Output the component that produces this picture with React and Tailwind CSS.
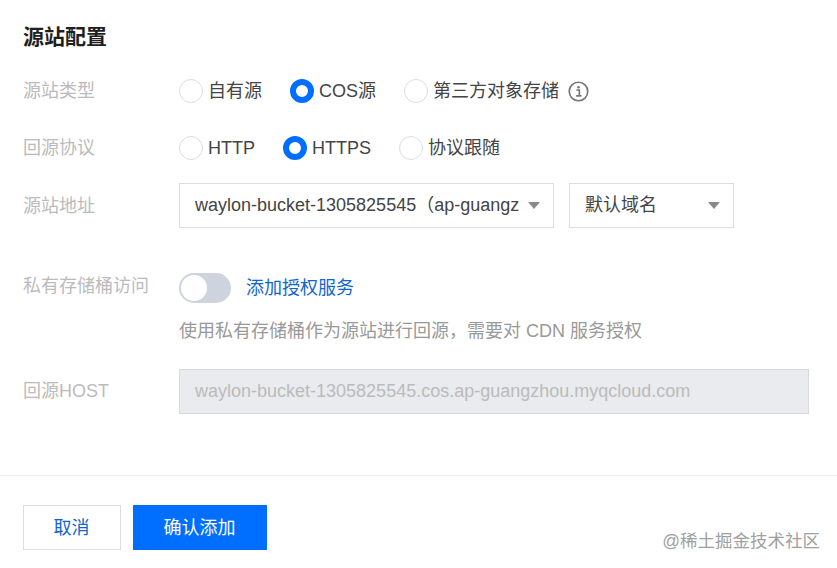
import React from 'react';

const FONT = "font-['Liberation_Sans','Noto_Sans_CJK_SC',sans-serif]";

const Radio = ({ label, checked, className = '' }) => (
    <label className={`flex items-center ${className}`}>
        {checked ? (
            <span className="w-6 h-6 rounded-full border-[6px] border-[#006eff] bg-white shrink-0" />
        ) : (
            <span className="w-6 h-6 rounded-full border border-[#dddddd] bg-white shrink-0" />
        )}
        <span className="ml-[5px] text-[18px] text-[#444444] leading-6 whitespace-nowrap">{label}</span>
    </label>
);

const Caret = () => (
    <span className="w-0 h-0 border-x-[6px] border-x-transparent border-t-[7px] border-t-[#888888] shrink-0" />
);

const Row = ({ label, className = '', labelClass = '', children }) => (
    <div className={`flex ${className}`}>
        <div className={`w-[156px] shrink-0 text-[18px] text-[#bbbbbb] leading-6 whitespace-nowrap ${labelClass}`}>{label}</div>
        <div className="flex-1 min-w-0">{children}</div>
    </div>
);

export default function App() {
    return (
        <div className={`${FONT} relative w-[837px] h-[568px] bg-white overflow-hidden`}>
            <div className="pl-[23px] pr-[28px] pt-[24px] h-[475px]">
                <h2 className="text-[21px] font-bold text-[#1f1f1f] leading-[26px] mb-[29px]">源站配置</h2>

                <Row label="源站类型" className="items-center h-6 mb-[33px]">
                    <div className="flex items-center">
                        <Radio label="自有源" />
                        <Radio label="COS源" checked className="ml-[28px]" />
                        <Radio label="第三方对象存储" className="ml-[28px]" />
                        <svg viewBox="0 0 20 20" className="w-[21px] h-[21px] ml-[9px] text-[#777777]" fill="none">
                            <circle cx="10" cy="10" r="8.8" stroke="currentColor" strokeWidth="1.6" />
                            <circle cx="10" cy="5.9" r="1.2" fill="currentColor" />
                            <path d="M8 8.6h2.8v5.2M7.8 14.2h5" stroke="currentColor" strokeWidth="1.6" />
                        </svg>
                    </div>
                </Row>

                <Row label="回源协议" className="items-center h-6 mb-[23px]">
                    <div className="flex items-center">
                        <Radio label="HTTP" />
                        <Radio label="HTTPS" checked className="ml-[28px]" />
                        <Radio label="协议跟随" className="ml-[28px]" />
                    </div>
                </Row>

                <Row label="源站地址" className="items-center h-[45px] mb-[45px]">
                    <div className="flex gap-[15px]">
                        <div className="w-[375px] h-[45px] border border-[#dddddd] flex items-center pl-[15px] pr-[13px]">
                            <span className="flex-1 min-w-0 overflow-hidden whitespace-nowrap text-[18px] text-[#444444]">
                                waylon-bucket-1305825545（ap-guangz
                            </span>
                            <Caret />
                        </div>
                        <div className="w-[165px] h-[45px] border border-[#dddddd] flex items-center justify-between pl-[15px] pr-[13px]">
                            <span className="text-[18px] text-[#444444]">默认域名</span>
                            <Caret />
                        </div>
                    </div>
                </Row>

                <Row label="私有存储桶访问" className="mb-[15px]" labelClass="pt-px">
                    <div className="flex items-center h-[30px]">
                        <span className="relative w-[52px] h-[30px] rounded-full bg-[#ced4dd] shrink-0">
                            <span className="absolute left-[2px] top-[2px] w-[26px] h-[26px] rounded-full bg-white" />
                        </span>
                        <a href="#" className="ml-[15px] text-[18px] text-[#0f66cc]">添加授权服务</a>
                    </div>
                    <p className="mt-[16px] text-[18px] leading-6 text-[#999999] whitespace-nowrap">
                        使用私有存储桶作为源站进行回源，需要对 CDN 服务授权
                    </p>
                </Row>

                <Row label="回源HOST" className="items-center h-[45px] mt-[26px]" labelClass="-mt-px">
                    <div className="w-[630px] h-[45px] bg-[#e9ebee] border border-[#d9d9d9] flex items-center pl-[15px] text-[18px] text-[#bbbbbb] whitespace-nowrap">
                        waylon-bucket-1305825545.cos.ap-guangzhou.myqcloud.com
                    </div>
                </Row>
            </div>

            <div className="border-t border-[#eeeeee] pt-[29px] pl-[23px] flex gap-3">
                <button className="w-[98px] h-[45px] border border-[#dddddd] bg-white text-[18px] text-[#0f66cc] pt-px pr-px">取消</button>
                <button className="w-[134px] h-[45px] bg-[#006eff] text-[18px] text-white pt-px pr-px">确认添加</button>
            </div>

            <span className="absolute right-[17px] top-[530px] text-[17.5px] leading-[22px] text-[#a0a0a0] whitespace-nowrap">@稀土掘金技术社区</span>
        </div>
    );
}
